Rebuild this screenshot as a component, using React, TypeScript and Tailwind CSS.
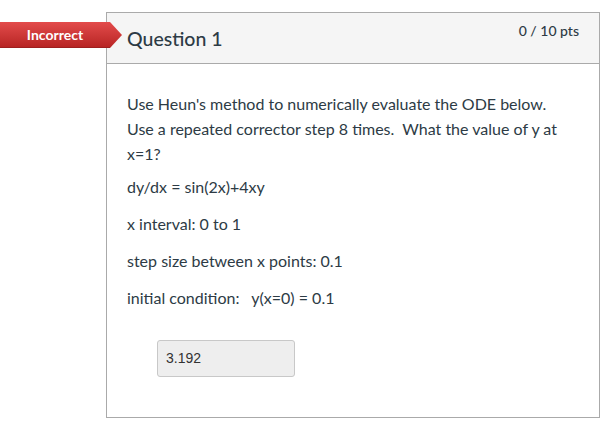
import React from 'react';

// Tarjeta de pregunta de quiz (estilo Canvas), con la cinta "Incorrect" encima
function IncorrectBanner() {
  return (
    <div className="absolute left-0 top-[22px] flex h-[26px] items-stretch">
      <div className="flex w-[110px] items-center justify-center border-b border-[#9e1f1f] bg-gradient-to-b from-[#e34b4b] to-[#b82424] text-[14px] font-bold text-white">
        Incorrect
      </div>
      <svg width="12" height="26" viewBox="0 0 12 26" className="block">
        <defs>
          <linearGradient id="rib" x1="0" y1="0" x2="0" y2="1">
            <stop offset="0" stopColor="#e34b4b" />
            <stop offset="1" stopColor="#b82424" />
          </linearGradient>
        </defs>
        <polygon points="0,0 12,13 0,26" fill="url(#rib)" />
      </svg>
    </div>
  );
}

export default function App() {
  return (
    <div
      className="relative h-[422px] w-[606px] bg-white text-[#2d3b45]"
      style={{ fontFamily: 'Lato, "Liberation Sans", sans-serif' }}
    >
      <div className="ml-[106px] pt-[12px]">
        <div className="flex h-[406px] w-[494px] flex-col border border-[#aaaaaa]">
          {/* cabecera */}
          <div className="flex h-[51px] items-start justify-between border-b border-[#aaaaaa] bg-[#f5f5f5] pl-[20px] pr-[20px]">
            <h2 className="mt-[13px] text-[19.5px] leading-[26px] font-medium text-[#2d3b45]">Question 1</h2>
            <span className="mt-[8px] text-[14px] leading-[20px] font-medium text-[#2d3b45]">0 / 10 pts</span>
          </div>

          {/* cuerpo */}
          <div className="flex flex-col pl-[20px] pr-[28px] pt-[27px] text-[16px] leading-[25px]">
            <div className="flex flex-col">
              <p>
                Use Heun's method to numerically evaluate the ODE below. Use a repeated corrector step 8 times.&nbsp; What
                the value of y at x=1?
              </p>
              <p className="mt-[8px]">dy/dx = sin(2x)+4xy</p>
              <p className="mt-[12px]">x interval: 0 to 1</p>
              <p className="mt-[12px]">step size between x points: 0.1</p>
              <p className="mt-[12px]">
                initial condition:&nbsp;&nbsp; y(x=0) = 0.1
              </p>
            </div>

            <div className="ml-[30px] mt-[30px] flex h-[37px] w-[138px] items-center rounded-[3px] border border-[#c8c8c8] bg-[#eeeeee] px-[8px]">
              <span className="text-[14px] text-[#333333]" style={{ fontFamily: '"Liberation Sans", Arial, sans-serif' }}>
                3.192
              </span>
            </div>
          </div>
        </div>
      </div>

      <IncorrectBanner />
    </div>
  );
}
